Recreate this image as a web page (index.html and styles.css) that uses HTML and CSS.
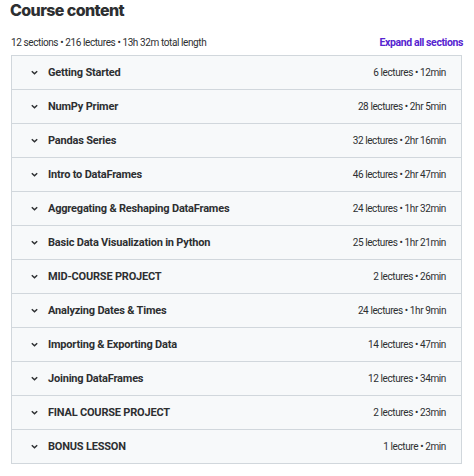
FILE: index.html
```html
<!DOCTYPE html>
<html>
<head>
<meta charset="utf-8">
<link rel="stylesheet" href="styles.css">
</head>
<body>
<div class="page">
  <h2 class="title">Course content</h2>
  <div class="meta">
    <span class="stats">12 sections • 216 lectures • 13h 32m total length</span>
    <button class="expand">Expand all sections</button>
  </div>
  <div class="list">
    <div class="row"><span class="chev"><svg width="9" height="9" viewBox="0 0 10 10"><path d="M2 3.5 L5 6.5 L8 3.5" fill="none" stroke="#2d2f31" stroke-width="1.6"/></svg></span><span class="name">Getting Started</span><span class="info">6 lectures • 12min</span></div>
    <div class="row"><span class="chev"><svg width="9" height="9" viewBox="0 0 10 10"><path d="M2 3.5 L5 6.5 L8 3.5" fill="none" stroke="#2d2f31" stroke-width="1.6"/></svg></span><span class="name">NumPy Primer</span><span class="info">28 lectures • 2hr 5min</span></div>
    <div class="row"><span class="chev"><svg width="9" height="9" viewBox="0 0 10 10"><path d="M2 3.5 L5 6.5 L8 3.5" fill="none" stroke="#2d2f31" stroke-width="1.6"/></svg></span><span class="name">Pandas Series</span><span class="info">32 lectures • 2hr 16min</span></div>
    <div class="row"><span class="chev"><svg width="9" height="9" viewBox="0 0 10 10"><path d="M2 3.5 L5 6.5 L8 3.5" fill="none" stroke="#2d2f31" stroke-width="1.6"/></svg></span><span class="name">Intro to DataFrames</span><span class="info">46 lectures • 2hr 47min</span></div>
    <div class="row"><span class="chev"><svg width="9" height="9" viewBox="0 0 10 10"><path d="M2 3.5 L5 6.5 L8 3.5" fill="none" stroke="#2d2f31" stroke-width="1.6"/></svg></span><span class="name">Aggregating &amp; Reshaping DataFrames</span><span class="info">24 lectures • 1hr 32min</span></div>
    <div class="row"><span class="chev"><svg width="9" height="9" viewBox="0 0 10 10"><path d="M2 3.5 L5 6.5 L8 3.5" fill="none" stroke="#2d2f31" stroke-width="1.6"/></svg></span><span class="name">Basic Data Visualization in Python</span><span class="info">25 lectures • 1hr 21min</span></div>
    <div class="row"><span class="chev"><svg width="9" height="9" viewBox="0 0 10 10"><path d="M2 3.5 L5 6.5 L8 3.5" fill="none" stroke="#2d2f31" stroke-width="1.6"/></svg></span><span class="name">MID-COURSE PROJECT</span><span class="info">2 lectures • 26min</span></div>
    <div class="row"><span class="chev"><svg width="9" height="9" viewBox="0 0 10 10"><path d="M2 3.5 L5 6.5 L8 3.5" fill="none" stroke="#2d2f31" stroke-width="1.6"/></svg></span><span class="name">Analyzing Dates &amp; Times</span><span class="info">24 lectures • 1hr 9min</span></div>
    <div class="row"><span class="chev"><svg width="9" height="9" viewBox="0 0 10 10"><path d="M2 3.5 L5 6.5 L8 3.5" fill="none" stroke="#2d2f31" stroke-width="1.6"/></svg></span><span class="name">Importing &amp; Exporting Data</span><span class="info">14 lectures • 47min</span></div>
    <div class="row"><span class="chev"><svg width="9" height="9" viewBox="0 0 10 10"><path d="M2 3.5 L5 6.5 L8 3.5" fill="none" stroke="#2d2f31" stroke-width="1.6"/></svg></span><span class="name">Joining DataFrames</span><span class="info">12 lectures • 34min</span></div>
    <div class="row"><span class="chev"><svg width="9" height="9" viewBox="0 0 10 10"><path d="M2 3.5 L5 6.5 L8 3.5" fill="none" stroke="#2d2f31" stroke-width="1.6"/></svg></span><span class="name">FINAL COURSE PROJECT</span><span class="info">2 lectures • 23min</span></div>
    <div class="row"><span class="chev"><svg width="9" height="9" viewBox="0 0 10 10"><path d="M2 3.5 L5 6.5 L8 3.5" fill="none" stroke="#2d2f31" stroke-width="1.6"/></svg></span><span class="name">BONUS LESSON</span><span class="info">1 lecture • 2min</span></div>
  </div>
</div>
</body>
</html>
```
FILE: styles.css
```css
html, body {
  margin: 0;
  padding: 0;
  background: #ffffff;
}
.page {
  width: 452px;
  padding: 0 12px 0 10px;
  font-family: "Roboto", "Inter", sans-serif;
  color: #2d2f31;
}
.title {
  margin: 0;
  font-family: "Inter", sans-serif;
  font-size: 16px;
  font-weight: 800;
  line-height: 20px;
  letter-spacing: -0.6px;
  padding-top: 0;
}
.meta {
  display: flex;
  justify-content: space-between;
  align-items: center;
  margin-top: 15px;
  height: 14px;
  margin-bottom: 6px;
}
.stats {
  font-size: 10px;
  letter-spacing: -0.4px;
  margin-left: 1px;
}
.expand {
  background: none;
  border: none;
  padding: 0;
  font-family: inherit;
  font-size: 10.5px;
  font-weight: 700;
  letter-spacing: -0.4px;
  color: #5624d0;
  margin-right: -1px;
}
.list {
  margin-left: 1px;
  border: 1px solid #d1d7dc;
  border-bottom: none;
}
.row {
  display: flex;
  align-items: center;
  height: 33px;
  background: #f7f9fa;
  border-bottom: 1px solid #d1d7dc;
  padding: 0 15px 0 18px;
}
.chev {
  display: flex;
  width: 9px;
  margin-right: 9px;
}
.name {
  flex: 1;
  font-size: 11px;
  font-weight: 700;
  letter-spacing: -0.2px;
}
.info {
  font-size: 10px;
  letter-spacing: -0.4px;
}
```
